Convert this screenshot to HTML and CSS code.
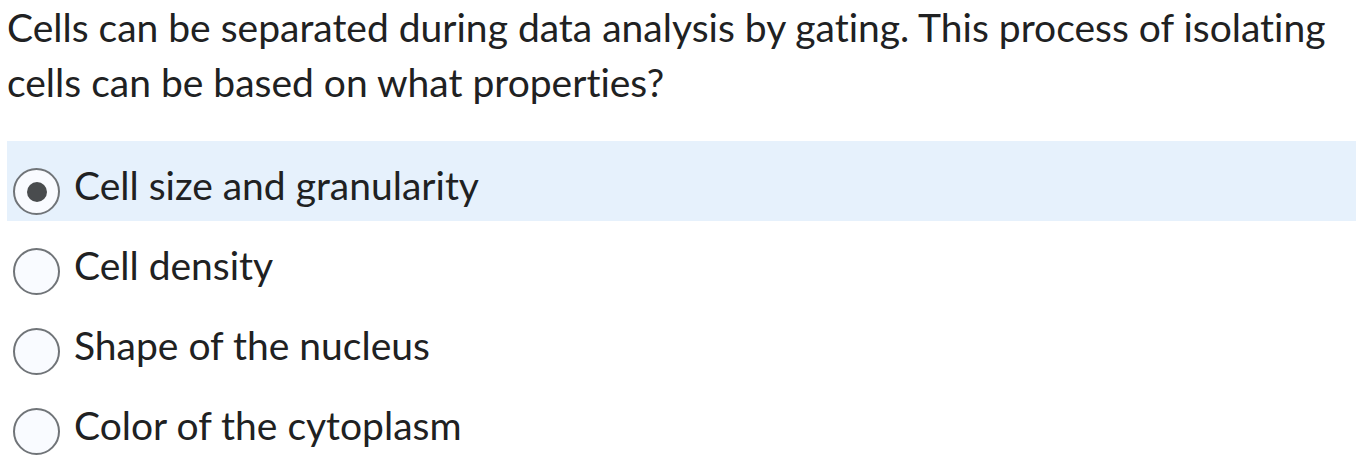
FILE: index.html
```html
<!DOCTYPE html>
<html lang="en">
<head>
<meta charset="utf-8">
<title>Question</title>
<link rel="stylesheet" href="styles.css">
</head>
<body>
<div class="page">
  <p class="question">Cells can be separated during data analysis by gating. This process of isolating cells can be based on what properties?</p>
  <ul class="options">
    <li class="option selected"><span class="radio"><span class="dot"></span></span><span class="label">Cell size and granularity</span></li>
    <li class="option"><span class="radio"></span><span class="label">Cell density</span></li>
    <li class="option"><span class="radio"></span><span class="label">Shape of the nucleus</span></li>
    <li class="option"><span class="radio"></span><span class="label">Color of the cytoplasm</span></li>
  </ul>
</div>
</body>
</html>
```
FILE: styles.css
```css
html, body {
  margin: 0;
  padding: 0;
  background: #ffffff;
}
body {
  font-family: Lato, "Noto Sans", sans-serif;
  color: #202122;
  font-size: 39px;
  font-variant-ligatures: none;
  font-feature-settings: "liga" 0, "clig" 0;
}
.page {
  padding: 0 0 0 7px;
}
.question {
  margin: 0;
  line-height: 55px;
  padding-right: 10px;
}
.options {
  list-style: none;
  margin: 31px 0 0 0;
  padding: 0;
}
.option {
  display: flex;
  align-items: flex-start;
  height: 80px;
  box-sizing: border-box;
  padding: 21px 0 0 6px;
}
.option.selected {
  background: #e6f1fc;
}
.radio {
  flex: none;
  width: 47px;
  height: 47px;
  box-sizing: border-box;
  margin-top: 6px;
  border: 2px solid #707478;
  border-radius: 50%;
  background: #f9fbff;
  display: flex;
  align-items: center;
  justify-content: center;
}
.dot {
  width: 20px;
  height: 20px;
  border-radius: 50%;
  background: #494c4e;
}
.label {
  margin-left: 14px;
  line-height: 47px;
}
```
